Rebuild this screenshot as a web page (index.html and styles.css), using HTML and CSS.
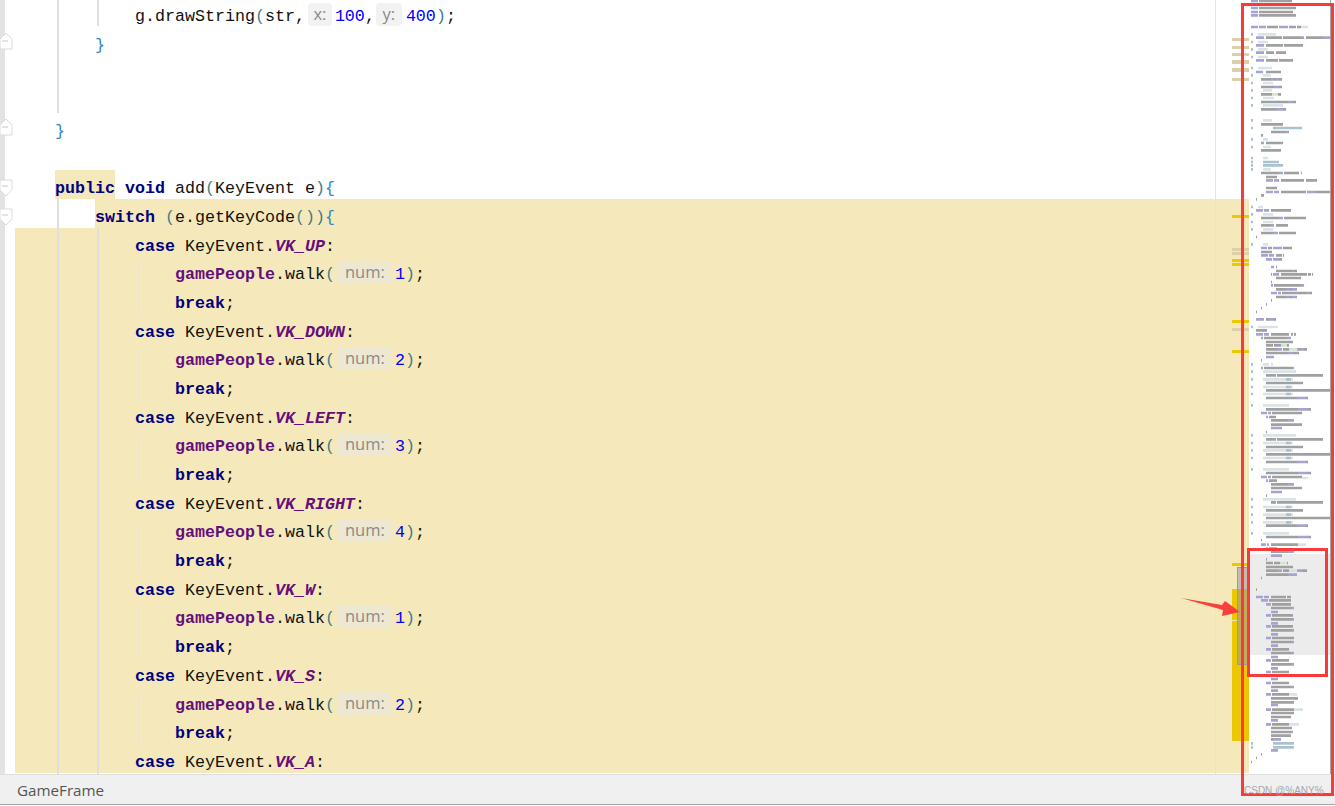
FILE: index.html
```html
<!DOCTYPE html>
<html lang="en">
<head>
<meta charset="utf-8">
<title>GameFrame</title>
<link rel="stylesheet" href="styles.css">
</head>
<body>
<div class="app">
  <main class="editor">
    <section class="pane">
      <div class="code">
        <div class="line">            g.drawString<span class="pr">(</span>str,<span class="hint hint-x">x:</span><span class="num">100</span>,<span class="hint hint-y">y:</span><span class="num">400</span><span class="pr">)</span>;</div>
        <div class="line">        <span class="br">}</span></div>
        <div class="line"></div>
        <div class="line"></div>
        <div class="line">    <span class="br">}</span></div>
        <div class="line"></div>
        <div class="line">    <span class="kw mark">public</span> <span class="kw">void</span> add<span class="pr">(</span>KeyEvent e<span class="pr">)</span><span class="br">{</span></div>
        <div class="line line-flex"><span>        </span><span class="grow"><span class="kw">switch</span> <span class="pr">(</span>e.getKeyCode<span class="pr">())</span><span class="br">{</span></span></div>
        <div class="block">
          <div class="line">            <span class="kw">case</span> KeyEvent.<span class="const">VK_UP</span>:</div>
          <div class="line">                <span class="field">gamePeople</span>.walk<span class="pr">(</span><span class="hint hint-num">num:</span><span class="num">1</span><span class="pr">)</span>;</div>
          <div class="line">                <span class="kw">break</span>;</div>
          <div class="line">            <span class="kw">case</span> KeyEvent.<span class="const">VK_DOWN</span>:</div>
          <div class="line">                <span class="field">gamePeople</span>.walk<span class="pr">(</span><span class="hint hint-num">num:</span><span class="num">2</span><span class="pr">)</span>;</div>
          <div class="line">                <span class="kw">break</span>;</div>
          <div class="line">            <span class="kw">case</span> KeyEvent.<span class="const">VK_LEFT</span>:</div>
          <div class="line">                <span class="field">gamePeople</span>.walk<span class="pr">(</span><span class="hint hint-num">num:</span><span class="num">3</span><span class="pr">)</span>;</div>
          <div class="line">                <span class="kw">break</span>;</div>
          <div class="line">            <span class="kw">case</span> KeyEvent.<span class="const">VK_RIGHT</span>:</div>
          <div class="line">                <span class="field">gamePeople</span>.walk<span class="pr">(</span><span class="hint hint-num">num:</span><span class="num">4</span><span class="pr">)</span>;</div>
          <div class="line">                <span class="kw">break</span>;</div>
          <div class="line">            <span class="kw">case</span> KeyEvent.<span class="const">VK_W</span>:</div>
          <div class="line">                <span class="field">gamePeople</span>.walk<span class="pr">(</span><span class="hint hint-num">num:</span><span class="num">1</span><span class="pr">)</span>;</div>
          <div class="line">                <span class="kw">break</span>;</div>
          <div class="line">            <span class="kw">case</span> KeyEvent.<span class="const">VK_S</span>:</div>
          <div class="line">                <span class="field">gamePeople</span>.walk<span class="pr">(</span><span class="hint hint-num">num:</span><span class="num">2</span><span class="pr">)</span>;</div>
          <div class="line">                <span class="kw">break</span>;</div>
          <div class="line">            <span class="kw">case</span> KeyEvent.<span class="const">VK_A</span>:</div>
        </div>
      </div>

      <svg class="overlay" viewBox="0 0 1249 774" aria-hidden="true">
        <path class="gutter" d="M2.5 0V774"/>
        <g class="fold">
          <path d="M0 39 6 33 12 39V49H0Z"/><path class="dash" d="M2 41H8"/>
          <path d="M0 125 6 119 12 125V135H0Z"/><path class="dash" d="M2 127H8"/>
          <path d="M0 180H12V190L6 196 0 190Z"/><path class="dash" d="M2 186H8"/>
          <path d="M0 209H12V219L6 225 0 219Z"/><path class="dash" d="M2 215H8"/>
        </g>
        <path class="guide" d="M58 0V113M58 199V774M98 0V26M98 228V774"/>
        <path class="guide-soft" d="M138.5 262V315M138.5 349V401M138.5 435V487M138.5 521V573M138.5 607V660M138.5 693V745"/>
        <path class="margin" d="M1215.5 0V774"/>
        <g class="stripe-pale">
          <rect x="1232" y="38" width="17" height="3"/><rect x="1232" y="46" width="17" height="3"/><rect x="1232" y="53" width="17" height="3"/><rect x="1232" y="60" width="17" height="4"/><rect x="1232" y="68" width="17" height="4"/><rect x="1232" y="78" width="17" height="3"/><rect x="1232" y="248" width="17" height="3"/><rect x="1232" y="252" width="17" height="3"/><rect x="1232" y="328" width="17" height="3"/>
        </g>
        <g class="stripe-gold">
          <rect x="1232" y="215" width="17" height="3"/><rect x="1232" y="259" width="17" height="3"/><rect x="1232" y="263" width="17" height="3"/><rect x="1232" y="320" width="17" height="3"/><rect x="1232" y="350" width="17" height="3"/><rect x="1232" y="563" width="17" height="3"/><rect x="1232" y="589" width="17" height="152"/>
        </g>
        <rect class="tick" x="1232" y="620" width="5" height="1"/>
        <rect class="thumb" x="1237.5" y="567.5" width="14" height="97"/>
      </svg>
    </section>

    <svg class="minimap" viewBox="237 0 258 2322" preserveAspectRatio="none" aria-hidden="true">
      <rect class="viewport" x="237" y="1662" width="243" height="303"/>
      <path class="mm-b" d="M393 81h21M264 103h54M264 126h30M264 148h30M264 171h30M264 204h42M279 226h24M279 249h30M279 271h27M279 294h33M279 316h60M279 361h27M279 418h15M279 441h24M279 474h15M279 508h24M264 621h15M279 643h30M279 666h30M279 688h30M279 733h15M264 981h60M279 1093h18M303 1093h6M279 1115h99M279 1138h90M279 1161h90M279 1182h90M279 1216h78M279 1306h99M279 1329h90M279 1351h90M279 1374h90M279 1408h78M279 1498h99M279 1521h90M279 1544h90M279 1567h90M279 1600h78M396 1434h18M384 1634h24M357 2083h24M372 2129h27M357 2173h30"/>
      <path class="mm-s" d="M243 103h6M243 126h6M243 148h6M243 171h6M243 204h6M243 226h6M243 249h6M243 271h6M243 294h6M243 316h6M243 361h6M243 384h6M243 418h6M243 441h6M243 474h6M243 486h6M243 496h6M243 508h6M243 621h6M243 643h6M243 666h6M243 688h6M243 733h6M243 981h6M243 1093h6M243 1115h6M243 1138h6M243 1161h6M243 1182h6M243 1216h6M243 1306h6M243 1329h6M243 1351h6M243 1374h6M243 1408h6M243 1498h6M243 1521h6M243 1544h6M243 1567h6M243 1600h6M243 2230h6M243 2242h6M309 384h87M279 486h48M279 496h60M348 1138h15M348 1161h15M348 1182h15M348 1329h15M348 1351h15M348 1374h15M348 1521h15M348 1544h15M348 1567h15M309 2230h63M309 2242h63"/>
      <path class="mm-c" d="M306 283h18M333 1036h18M357 1048h24M330 1689h21M357 1712h24"/>
      <path class="mm-g" d="M267 3h99M267 24h111M267 36h102M267 46h111M291 81h33M357 81h21M381 81h12M288 113h48M339 113h54M408 113h51M288 136h51M342 136h57M288 158h24M318 158h30M288 181h36M327 181h42M288 216h45M273 238h30M312 238h6M327 238h9M273 261h39M327 261h9M273 283h33M324 283h9M273 306h81M369 306h9M273 328h48M339 328h9M273 373h66M303 396h45M354 396h3M273 406h6M288 429h51M273 451h60M273 519h54M342 519h45M393 519h3M288 531h33M333 541h69M408 541h33M288 564h33M333 576h75M438 576h42M273 586h9M258 598h3M303 631h60M273 654h54M342 654h66M273 676h30M318 676h36M273 699h39M327 699h51M258 711h3M294 744h12M339 744h27M273 756h33M318 766h18M339 766h3M327 778h9M318 801h3M318 813h48M372 813h9M303 823h3M333 823h78M414 823h9M426 823h3M318 834h75M303 846h3M312 856h81M318 868h30M357 868h9M336 879h75M420 879h6M318 891h30M357 891h9M303 901h3M288 913h3M273 924h3M258 936h3M288 958h9M312 958h6M258 991h33M303 1003h54M363 1003h6M372 1003h6M282 1014h69M288 1026h81M288 1036h21M312 1036h21M351 1036h6M288 1048h36M339 1048h18M387 1048h6M402 1048h9M288 1059h66M369 1059h18M273 1081h3M282 1104h84M288 1126h30M321 1126h138M288 1149h111M288 1171h192M288 1194h93M408 1194h6M288 1228h96M414 1228h9M306 1239h90M297 1251h21M303 1261h51M303 1274h93M288 1296h3M288 1318h30M321 1318h138M288 1341h111M288 1363h192M288 1386h93M408 1386h6M288 1419h96M414 1419h9M306 1431h90M297 1442h24M303 1453h51M303 1464h93M288 1487h3M303 1507h15M321 1507h138M288 1531h111M288 1554h192M288 1577h93M408 1577h6M288 1611h96M414 1611h9M273 1620h3M303 1634h81M297 1646h24M303 1655h51M288 1678h3M288 1689h21M312 1689h18M351 1689h3M288 1701h81M288 1712h36M339 1712h18M399 1712h12M288 1724h66M273 1734h3M258 1769h3M303 1791h45M351 1791h12M297 1801h66M306 1813h57M303 1824h60M306 1846h63M303 1858h63M306 1879h63M303 1891h63M306 1914h66M303 1926h63M306 1948h51M303 1959h60M306 1981h51M303 1993h63M306 2016h51M306 2049h51M303 2061h60M306 2083h51M303 2095h81M303 2107h69M306 2129h66M303 2139h69M303 2151h60M306 2173h51M303 2184h63M303 2196h60M303 2207h60M303 2218h9M273 2263h3M258 2274h3M243 2286h3"/>
      <path class="mm-p" d="M243 3h21M243 24h21M243 36h21M243 46h21M243 81h21M267 81h21M327 81h27M258 113h24M393 113h9M459 113h21M258 136h24M258 158h24M258 181h24M258 216h21M303 238h9M318 238h9M312 261h15M354 306h15M321 328h18M348 396h6M273 429h9M327 519h12M288 541h21M312 541h15M288 576h21M312 576h15M411 576h27M258 631h21M282 631h15M327 654h12M303 676h9M312 699h12M273 744h18M309 744h27M273 766h21M297 766h15M288 778h18M309 778h18M303 801h9M366 813h6M309 823h18M303 856h6M393 856h9M348 868h9M366 868h15M303 879h18M324 879h9M411 879h9M348 891h9M366 891h15M258 958h24M297 958h15M258 1003h21M282 1003h15M273 1014h6M351 1014h12M324 1048h12M381 1048h6M393 1048h9M354 1059h15M288 1071h24M273 1104h6M366 1104h6M381 1194h27M384 1228h30M273 1239h18M294 1239h9M288 1251h6M354 1261h18M303 1284h33M381 1386h27M384 1419h30M273 1431h18M294 1431h9M288 1442h6M354 1453h18M303 1476h33M381 1577h27M384 1611h30M273 1634h15M291 1634h6M288 1646h6M354 1655h18M303 1667h33M324 1712h12M381 1712h18M354 1724h27M258 1791h21M282 1791h15M273 1801h21M288 1813h15M363 1824h9M303 1836h21M288 1846h15M366 1858h6M303 1870h21M288 1879h15M366 1891h6M303 1903h21M288 1914h15M366 1926h6M303 1937h21M288 1948h15M363 1959h9M303 1971h21M288 1981h15M366 1993h6M303 2005h21M288 2016h15M303 2037h21M288 2049h15M363 2061h9M303 2072h21M288 2083h15M303 2115h21M288 2129h15M303 2161h21M288 2173h15M363 2196h6M312 2218h21M303 2251h21"/>
      <path class="mm-edge" d="M481.5 0V2322"/>
    </svg>
  </main>

  <footer class="status">GameFrame</footer>
  <div class="status-foot"></div>

  <svg class="arrow" viewBox="0 0 62 20" aria-hidden="true"><path d="M0 0 41 7 44 3 59 14 41 18 42 12Z"/></svg>
  <div class="frame frame-outer"></div>
  <div class="frame frame-inner"></div>
  <span class="watermark">CSDN @%ANY%</span>
</div>
</body>
</html>
```

FILE: styles.css
```css
* { box-sizing: border-box; }

html, body {
  margin: 0;
  background: #fff;
}

.app {
  position: relative;
  display: flex;
  flex-direction: column;
  width: 1335px;
  height: 806px;
  overflow: hidden;
}

.editor {
  display: flex;
  height: 774px;
  flex: none;
}

.pane {
  position: relative;
  width: 1249px;
  flex: none;
  overflow: hidden;
}

.code {
  margin-top: -2px;
  padding-left: 15px;
  font: 16.67px/37.7px "Liberation Mono", monospace;
  color: #111;
}

.line {
  height: 28.7px;
  white-space: pre;
}

.line-flex {
  display: flex;
}

.grow {
  flex: 1;
  background: #f5e9bb;
}

.block {
  background: #f5e9bb;
}

.mark {
  background: #f5e9bb;
  display: inline-block;
  height: 28.7px;
}

.kw { color: #000080; font-weight: 700; }
.const { color: #660e7a; font-weight: 700; font-style: italic; }
.field { color: #660e7a; font-weight: 700; }
.num { color: #0000ff; }
.pr { color: #3f7f8c; }
.br { color: #2f86c8; }

.hint {
  display: inline-block;
  height: 23px;
  text-align: center;
  vertical-align: 1px;
  border-radius: 4px;
  background: #f2f2f2;
  color: #8a8a8a;
  font: 16.5px/22px "Open Sans", sans-serif;
}

.block .hint { background: #eee8d2; }

.hint-x { width: 24px; margin: 0 3px; }
.hint-y { width: 26px; margin: 0 4px 0 1px; }
.hint-num { width: 54px; margin: 0 3px; }

.overlay {
  position: absolute;
  top: 0;
  left: 0;
  width: 1249px;
  height: 774px;
  pointer-events: none;
}

.gutter { stroke: #e3e3e3; stroke-width: 5; fill: none; }
.fold path { fill: #fff; stroke: #dcdcdc; stroke-width: 1; }
.fold .dash { stroke: #c8c8c8; fill: none; }
.guide { stroke: #dfdfdf; stroke-width: 2; fill: none; }
.guide-soft { stroke: #ece5cb; stroke-width: 1; fill: none; }
.margin { stroke: #e3e3e3; stroke-width: 1; fill: none; }
.stripe-pale rect { fill: #ddd0a8; }
.stripe-gold rect { fill: #ecc800; }
.tick { fill: #f3e6a8; }
.thumb { fill: rgba(150, 150, 170, 0.55); stroke: #9b9b9b; stroke-width: 1; }

.minimap {
  width: 86px;
  height: 774px;
  flex: none;
  background: #fff;
}

.minimap path { fill: none; stroke-width: 8; }
.viewport { fill: #ececec; }
.mm-g { stroke: #a0a0a0; }
.mm-p { stroke: #a5a3d2; }
.mm-b { stroke: #d9e4e9; }
.mm-s { stroke: #aac2d0; }
.mm-c { stroke: #cfe6d2; }
.minimap .mm-edge { stroke: #a8a8a8; stroke-width: 3; }

.status {
  flex: none;
  height: 31px;
  padding-left: 17px;
  border-top: 1px solid #dedede;
  border-bottom: 1px solid #a6a6a6;
  background: #f0f0f0;
  color: #555;
  font: 15.2px/30px "Open Sans", sans-serif;
}

.status-foot {
  flex: 1;
}

.arrow {
  position: absolute;
  top: 598px;
  left: 1181px;
  width: 62px;
  height: 20px;
}

.arrow path { fill: #f9403b; }

.frame {
  position: absolute;
  border: 3px solid #f83a3a;
  pointer-events: none;
}

.frame-outer { left: 1241px; top: 3px; width: 93px; height: 793px; }
.frame-inner { left: 1247px; top: 548px; width: 81px; height: 129px; }

.watermark {
  position: absolute;
  left: 1244px;
  top: 783px;
  color: #a8a8a8;
  font: 10px/16px "Liberation Sans", sans-serif;
  white-space: nowrap;
}
```
